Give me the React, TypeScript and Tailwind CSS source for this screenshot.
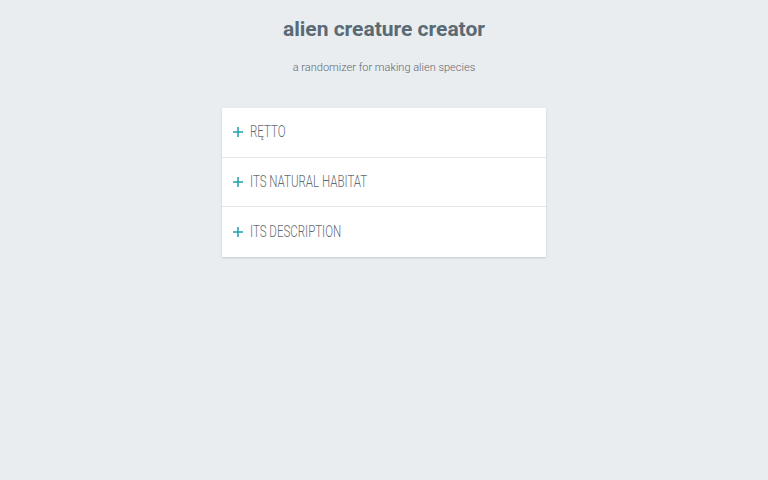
import React from 'react';

const items = ['RĘTTO', 'ITS NATURAL HABITAT', 'ITS DESCRIPTION'];

const Plus = () => (
  <svg width="10" height="10" viewBox="0 0 10 10" className="shrink-0">
    <path d="M5 0v10M0 5h10" stroke="#1fa2ad" strokeWidth="1.5" />
  </svg>
);

export default function App() {
  return (
    <div className="min-h-screen w-full bg-[#e9edf0] flex flex-col items-center" style={{ fontFamily: 'Roboto, sans-serif' }}>
      <h1 className="mt-[15px] text-[21px] leading-[28px] font-bold text-[#596a75]">alien creature creator</h1>
      <p className="mt-[18px] text-[11px] leading-[14px] font-light text-[#5f686e]">a randomizer for making alien species</p>
      <div className="mt-[33px] w-[324px] bg-white shadow-[0_1px_2px_rgba(0,0,0,0.15)]">
        {items.map((item, i) => (
          <div
            key={item}
            className={`h-[49.5px] flex items-center gap-[7px] pl-[11px] ${i < items.length - 1 ? 'border-b border-[#e3e5e7]' : ''}`}
          >
            <Plus />
            <span className="inline-block origin-left scale-x-[0.72] whitespace-nowrap text-[16px] text-[#5f6b73] font-light">
              {item}
            </span>
          </div>
        ))}
      </div>
    </div>
  );
}
